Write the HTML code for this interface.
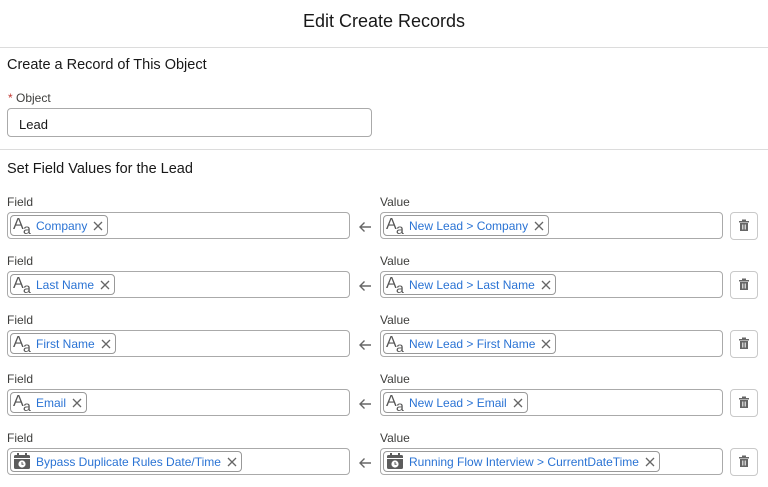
<!DOCTYPE html><html><head><style>
body{margin:0;width:768px;height:487px;background:#fff;font-family:"Liberation Sans",sans-serif;color:#181818;position:relative;overflow:hidden}
.a{position:absolute}
.t{top:11px;width:768px;text-align:center;font-size:18px}
.hr{left:0;width:768px;height:1px;background:#dcdcdc}
.h{left:7px;font-size:14.5px}
.l{font-size:12px;color:#3e3e3c}
.box{height:27px;border:1px solid #aaa;border-radius:4px;box-sizing:border-box;background:#fff}
.pill{position:absolute;left:2px;top:2px;height:21px;border:1px solid #999;border-radius:4px;box-sizing:border-box;display:flex;align-items:center;padding:0 4px 0 2px;font-size:12px;color:#2a73d4;white-space:nowrap}
.ic{color:#555;margin-right:4px;position:relative;width:19px;height:18px}
.ic b{position:absolute;left:0;top:-1px;font-weight:normal;font-size:16px}
.ic i{position:absolute;left:10px;top:4px;font-style:normal;font-size:14px}
.x{margin-left:6px;display:inline-block;width:10px;height:10px}
.arr{color:#666}
.tr{width:28px;height:28px;border:1px solid #c9c9c9;border-radius:4px;box-sizing:border-box}
</style></head><body>
<div class="a t">Edit Create Records</div>
<div class="a hr" style="top:47px"></div>
<div class="a h" style="top:57px">Create a Record of This Object</div>
<div class="a l" style="left:8px;top:91px"><span style="color:#c23934">*</span> Object</div>
<div class="a box" style="left:7px;top:108px;width:365px;height:29px;font-size:13px;padding:8px 11px">Lead</div>
<div class="a hr" style="top:149px"></div>
<div class="a h" style="top:161px">Set Field Values for the Lead</div>
<div id="rows"></div>
<script>
var r=[["Company","New Lead > Company",0],["Last Name","New Lead > Last Name",0],["First Name","New Lead > First Name",0],["Email","New Lead > Email",0],["Bypass Duplicate Rules Date/Time","Running Flow Interview > CurrentDateTime",1]];
var aa='<span class="ic"><b>A</b><i>a</i></span>';
var cal='<svg width="18" height="17" viewBox="0 0 18 17" style="margin-right:5px"><rect x="1" y="2" width="16" height="14" rx="1.5" fill="#5c5c5c"/><rect x="4" y="0" width="2" height="4" fill="#5c5c5c"/><rect x="12" y="0" width="2" height="4" fill="#5c5c5c"/><rect x="1" y="5" width="16" height="1" fill="#fff"/><circle cx="9" cy="11" r="3.6" fill="#fff"/><path d="M9 9v2.3h1.6" stroke="#5c5c5c" stroke-width="1" fill="none"/></svg>';
var xs='<svg class="x" viewBox="0 0 10 10"><path d="M1 1L9 9M9 1L1 9" stroke="#666" stroke-width="1.3"/></svg>';
var ar='<svg width="14" height="12" viewBox="0 0 14 12"><path d="M13 6H2M6.5 1.5L2 6l4.5 4.5" stroke="#666" stroke-width="1.4" fill="none"/></svg>';
var h='';
r.forEach(function(o,i){var y=i*59;var ic=o[2]?cal:aa;
h+='<div class="a l" style="left:7px;top:'+(195+y)+'px">Field</div><div class="a l" style="left:380px;top:'+(195+y)+'px">Value</div>';
h+='<div class="a box" style="left:7px;top:'+(212+y)+'px;width:343px"><div class="pill">'+ic+o[0]+xs+'</div></div>';
h+='<div class="a arr" style="left:358px;top:'+(220+y)+'px">'+ar+'</div>';
h+='<div class="a box" style="left:380px;top:'+(212+y)+'px;width:343px"><div class="pill">'+ic+o[1]+xs+'</div></div>';
h+='<div class="a tr" style="left:730px;top:'+(212+y)+'px"><svg width="26" height="26" viewBox="0 0 26 26"><rect x="9" y="10" width="8" height="8" fill="#666"/><rect x="8" y="8" width="10" height="1.5" fill="#666"/><rect x="11" y="6.5" width="4" height="1.5" fill="#666"/><rect x="11.3" y="11.5" width="1" height="5" fill="#fff"/><rect x="13.7" y="11.5" width="1" height="5" fill="#fff"/></svg></div>';});
document.getElementById('rows').innerHTML=h;
</script>
</body></html>
